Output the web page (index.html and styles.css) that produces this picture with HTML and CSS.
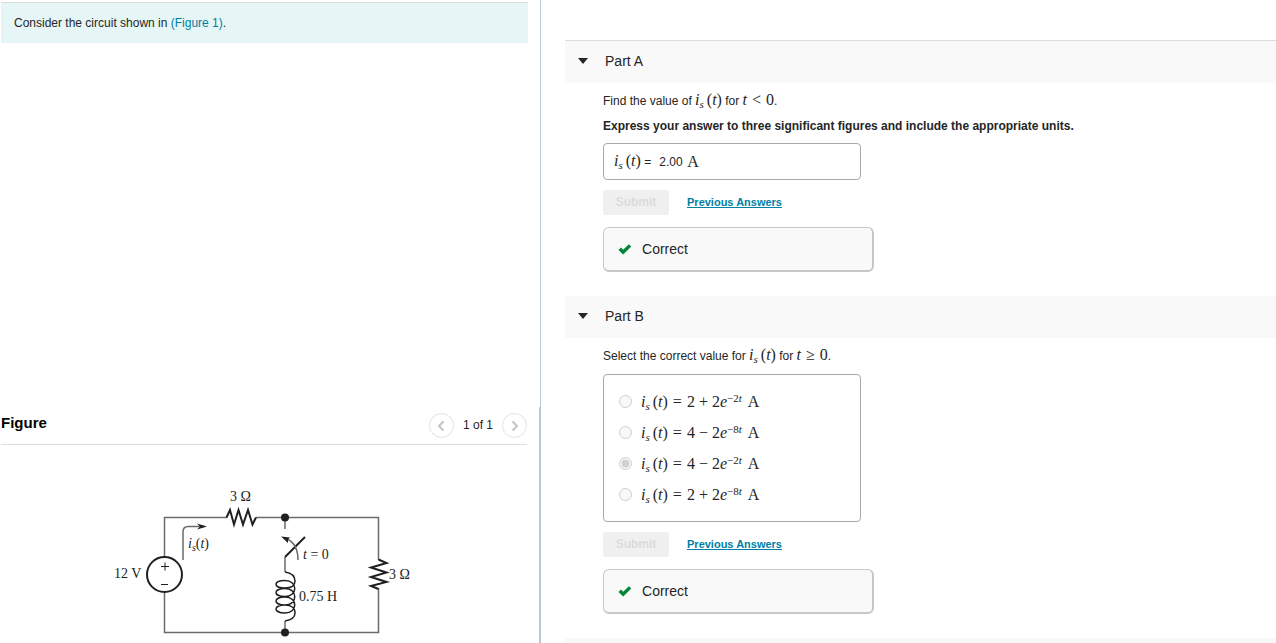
FILE: index.html
```
<!DOCTYPE html>
<html lang="en">
<head>
    <meta charset="UTF-8">
    <meta name="viewport" content="width=device-width, initial-scale=1.0">
    <title>Circuit Problem</title>
    <link rel="stylesheet" href="styles.css">
</head>
<body>
    <div class="left-pane">
        <section class="intro-panel">
            <p class="intro">Consider the circuit shown in <a href="#figure">(Figure 1)</a>.</p>
        </section>

        <section class="figure-panel" id="figure">
            <div class="figure-header">
                <h2>Figure</h2>
                <div class="pager">
                    <button type="button" aria-label="Previous figure" disabled>
                        <svg width="8" height="12" viewBox="0 0 8 12"><path d="M6.5 1.5 L2 6 L6.5 10.5"/></svg>
                    </button>
                    <span>1 of 1</span>
                    <button type="button" aria-label="Next figure" disabled>
                        <svg width="8" height="12" viewBox="0 0 8 12"><path d="M1.5 1.5 L6 6 L1.5 10.5"/></svg>
                    </button>
                </div>
            </div>

            <svg class="circuit" width="328" height="198" viewBox="0 0 328 198" role="img" aria-label="Circuit diagram">
                <!-- wires -->
                <g class="wire">
                    <path d="M127 72.5 H64.5 V112"/>
                    <path d="M156 72.5 H278.5 V115"/>
                    <path d="M64.5 147 V187.5 H278.5 V143"/>
                    <path d="M185 72 V84"/>
                    <path d="M185 112 V127"/>
                    <path d="M185 176 V187"/>
                </g>
                <circle class="dot" cx="185" cy="72.5" r="4"/>
                <circle class="dot" cx="185" cy="187.5" r="4"/>

                <!-- voltage source -->
                <circle class="part-line" cx="64.5" cy="129.5" r="17.5"/>
                <path class="sign" d="M61 121.5 H69 M65 117.5 V125.5 M61 139.5 H68"/>

                <!-- current arrow -->
                <path class="wire" d="M83 115 V87 Q83 81.5 88 81.5 H104"/>
                <path class="arrow" d="M107 81.5 L97 78.5 L100 81.5 L97 84.5 Z"/>

                <!-- resistors -->
                <path class="part-line" d="M126.5 72.5 L130 65 L134 79.5 L138.5 65 L143 79.5 L148 65 L152.5 79.5 L156 72.5"/>
                <path class="part-line" d="M278.5 114.5 L286.5 118 L271 122.5 L286.5 127.5 L271 132 L286.5 137 L271 141 L278.5 144"/>

                <!-- switch -->
                <path class="part-line" d="M185 112 L205 92"/>
                <path class="wire" d="M198 115 Q198 99 187 94"/>
                <path class="arrow" d="M181 91.5 L190 92.5 L188 94.5 L188 98 Z"/>

                <!-- inductor -->
                <path class="part-line coil" d="M185 127 C191 128 195 131 195 136 C195 141 191 143 185 143 C173 143 173 135.5 185 135.5 C198 135.5 198 151.5 185 151.5 C173 151.5 173 143.5 185 143.5 C198 143.5 198 160 185 160 C173 160 173 152 185 152 C198 152 198 168 185 168 C173 168 173 160 185 160 C191 160 195 163 195 168 C195 173 191 175 185 176"/>

                <text x="130" y="56">3 Ω</text>
                <text x="88" y="103"><tspan class="var">i</tspan><tspan class="var sub" dy="3">s</tspan><tspan dy="-3">(</tspan><tspan class="var">t</tspan>)</text>
                <text x="14" y="133">12 V</text>
                <text x="203" y="114"><tspan class="var">t</tspan> = 0</text>
                <text x="199" y="156">0.75 H</text>
                <text x="289" y="134">3 Ω</text>
            </svg>
        </section>
    </div>

    <main class="right-pane">
        <section class="part">
            <h2 class="part-header first">
                <button type="button" aria-expanded="true">
                    <svg width="10" height="6" viewBox="0 0 10 6"><path d="M0 0 H10 L5 6 Z"/></svg>
                    Part A
                </button>
            </h2>
            <div class="part-body">
                <p>Find the value of <span class="math"><i>i</i><sub>s</sub>(<i>t</i>)</span> for <span class="math"><i>t</i><span class="rel">&lt;</span>0</span>.</p>
                <p class="instructions">Express your answer to three significant figures and include the appropriate units.</p>
                <div class="answer-box value-box">
                    <label for="answer-a"><span class="math"><i>i</i><sub>s</sub>(<i>t</i>)</span> =</label>
                    <input type="text" id="answer-a" value="2.00" readonly>
                    <span class="math">A</span>
                </div>
                <div class="actions">
                    <button type="button" class="submit" disabled>Submit</button>
                    <a href="#">Previous Answers</a>
                </div>
                <div class="feedback">
                    <svg width="14" height="11" viewBox="0 0 14 11"><path d="M0.5 6 L3 3.5 L5.2 5.8 L10.8 0.3 L13.3 2.6 L5.2 10.5 Z"/></svg>
                    Correct
                </div>
            </div>
        </section>

        <section class="part">
            <h2 class="part-header">
                <button type="button" aria-expanded="true">
                    <svg width="10" height="6" viewBox="0 0 10 6"><path d="M0 0 H10 L5 6 Z"/></svg>
                    Part B
                </button>
            </h2>
            <div class="part-body">
                <p>Select the correct value for <span class="math"><i>i</i><sub>s</sub>(<i>t</i>)</span> for <span class="math"><i>t</i><span class="rel">≥</span>0</span>.</p>
                <div class="answer-box choices">
                    <label><input type="radio" name="answer-b" disabled><span class="math"><i>i</i><sub>s</sub>(<i>t</i>)<span class="rel">=</span>2<span class="bin">+</span>2<i>e</i><sup>−2<i>t</i></sup><span class="unit">A</span></span></label>
                    <label><input type="radio" name="answer-b" disabled><span class="math"><i>i</i><sub>s</sub>(<i>t</i>)<span class="rel">=</span>4<span class="bin">−</span>2<i>e</i><sup>−8<i>t</i></sup><span class="unit">A</span></span></label>
                    <label><input type="radio" name="answer-b" checked disabled><span class="math"><i>i</i><sub>s</sub>(<i>t</i>)<span class="rel">=</span>4<span class="bin">−</span>2<i>e</i><sup>−2<i>t</i></sup><span class="unit">A</span></span></label>
                    <label><input type="radio" name="answer-b" disabled><span class="math"><i>i</i><sub>s</sub>(<i>t</i>)<span class="rel">=</span>2<span class="bin">+</span>2<i>e</i><sup>−8<i>t</i></sup><span class="unit">A</span></span></label>
                </div>
                <div class="actions">
                    <button type="button" class="submit" disabled>Submit</button>
                    <a href="#">Previous Answers</a>
                </div>
                <div class="feedback">
                    <svg width="14" height="11" viewBox="0 0 14 11"><path d="M0.5 6 L3 3.5 L5.2 5.8 L10.8 0.3 L13.3 2.6 L5.2 10.5 Z"/></svg>
                    Correct
                </div>
            </div>
        </section>

        <section class="part">
            <div class="part-header"></div>
        </section>
    </main>
</body>
</html>
```

FILE: styles.css
```
* {
    box-sizing: border-box;
}

body {
    margin: 0;
    height: 100vh;
    display: flex;
    overflow: hidden;
    background: #fff;
    color: #252525;
    font-family: "Liberation Sans", Arial, sans-serif;
    font-size: 12px;
    line-height: 20px;
}

h2, p {
    margin: 0;
}

a {
    color: #007fa3;
}

button {
    font-family: inherit;
}

/* Left side */
.left-pane {
    flex: 0 0 42.4%;
    display: flex;
    flex-direction: column;
}

.intro-panel {
    flex: 1;
    padding: 2px 12px 0 1px;
    border-right: 1px solid #b8cbdc;
}

.intro {
    padding: 10px 13px;
    background: #e6f6f7;
    border-top: 1px solid #dcdcdc;
}

.intro a {
    text-decoration: none;
}

.figure-panel {
    padding: 0 12px 0 1px;
    border-right: 2px solid #b8cbdc;
}

.figure-header {
    display: flex;
    justify-content: space-between;
    padding: 6px 0;
    border-bottom: 1px solid #dcdcdc;
}

.figure-header h2 {
    color: #000;
    font-size: 15px;
    line-height: 20px;
}

.pager {
    display: flex;
    align-items: center;
    gap: 9px;
    line-height: 25px;
}

.pager button {
    display: flex;
    align-items: center;
    justify-content: center;
    width: 25px;
    height: 25px;
    padding: 0;
    border: 1px solid #e2e2e2;
    border-radius: 50%;
    background: #fff;
}

.pager svg {
    fill: none;
    stroke: #c4c4c4;
    stroke-width: 2;
}

/* Circuit drawing */
.circuit {
    display: block;
    margin: 0 auto;
    font-family: "Liberation Serif", "Times New Roman", serif;
    font-size: 14px;
    fill: #231f20;
}

.circuit .wire {
    fill: none;
    stroke: #6b6b6b;
    stroke-width: 1.5;
}

.circuit .part-line {
    fill: none;
    stroke: #231f20;
    stroke-width: 2;
}

.circuit .coil {
    stroke-width: 1.5;
}

.circuit .sign {
    stroke: #231f20;
    stroke-width: 1;
}

.circuit .var {
    font-style: italic;
}

.circuit .sub {
    font-size: 10px;
}

/* Right side */
.right-pane {
    flex: 1;
    padding: 40px 0 0 24px;
    overflow: hidden;
}

.part {
    margin-bottom: 24px;
}

.part-header {
    height: 42px;
    background: #f9f9f9;
}

.part-header.first {
    height: 43px;
    border-top: 1px solid #dcdcdc;
}

.part-header button {
    display: flex;
    align-items: center;
    gap: 17px;
    width: 100%;
    height: 100%;
    padding: 0 13px 2px;
    border: 0;
    background: none;
    color: #252525;
    font-size: 14px;
    cursor: pointer;
}

.part-header svg {
    fill: #252525;
}

.part-body {
    padding: 8px 38px 0;
}

.instructions {
    margin-top: 5px;
    font-weight: bold;
}

.answer-box {
    width: 258px;
    margin-top: 8px;
    border: 1px solid #a9a9a9;
    border-radius: 4px;
}

.value-box {
    display: flex;
    align-items: center;
    gap: 8px;
    height: 37px;
    padding: 0 10px;
    margin-top: 7px;
}

.value-box input {
    width: 24px;
    padding: 0;
    margin-right: -4px;
    border: 0;
    outline: 0;
    color: #252525;
    font-family: inherit;
    font-size: 12px;
}

.choices {
    padding: 11px 15px;
}

.choices label {
    display: flex;
    align-items: center;
    gap: 9px;
    height: 31px;
}

.choices input {
    width: 13px;
    height: 13px;
    margin: 0;
}

.actions {
    display: flex;
    align-items: center;
    gap: 18px;
    margin: 10px 0 12px;
}

.actions a {
    padding-bottom: 2px;
    font-size: 11px;
    font-weight: bold;
}

.submit {
    width: 66px;
    height: 25px;
    padding: 0 0 2px;
    border: 0;
    border-radius: 2px;
    background: #f0f0f0;
    color: #dcdcdc;
    font-size: 12px;
    font-weight: bold;
}

.feedback {
    display: flex;
    align-items: center;
    gap: 10px;
    width: 271px;
    height: 45px;
    padding: 0 14px;
    border: 1px solid #c7c7c7;
    border-right-width: 2px;
    border-bottom-width: 2px;
    border-radius: 6px;
    background: #f9f9f9;
    font-size: 14px;
}

.feedback svg {
    fill: #008638;
}

/* Formulas */
.math {
    font-family: "Liberation Serif", "Times New Roman", serif;
    font-size: 16px;
    line-height: 1;
}

.math sub,
.math sup {
    font-size: 11px;
    line-height: 0;
}

.math sub {
    font-style: italic;
    margin-right: 3px;
    vertical-align: -3px;
}

.math sup {
    vertical-align: 5px;
}

.math .rel {
    margin: 0 5px;
}

.math .bin {
    margin: 0 4px;
}

.math .unit {
    margin-left: 6px;
}
```
